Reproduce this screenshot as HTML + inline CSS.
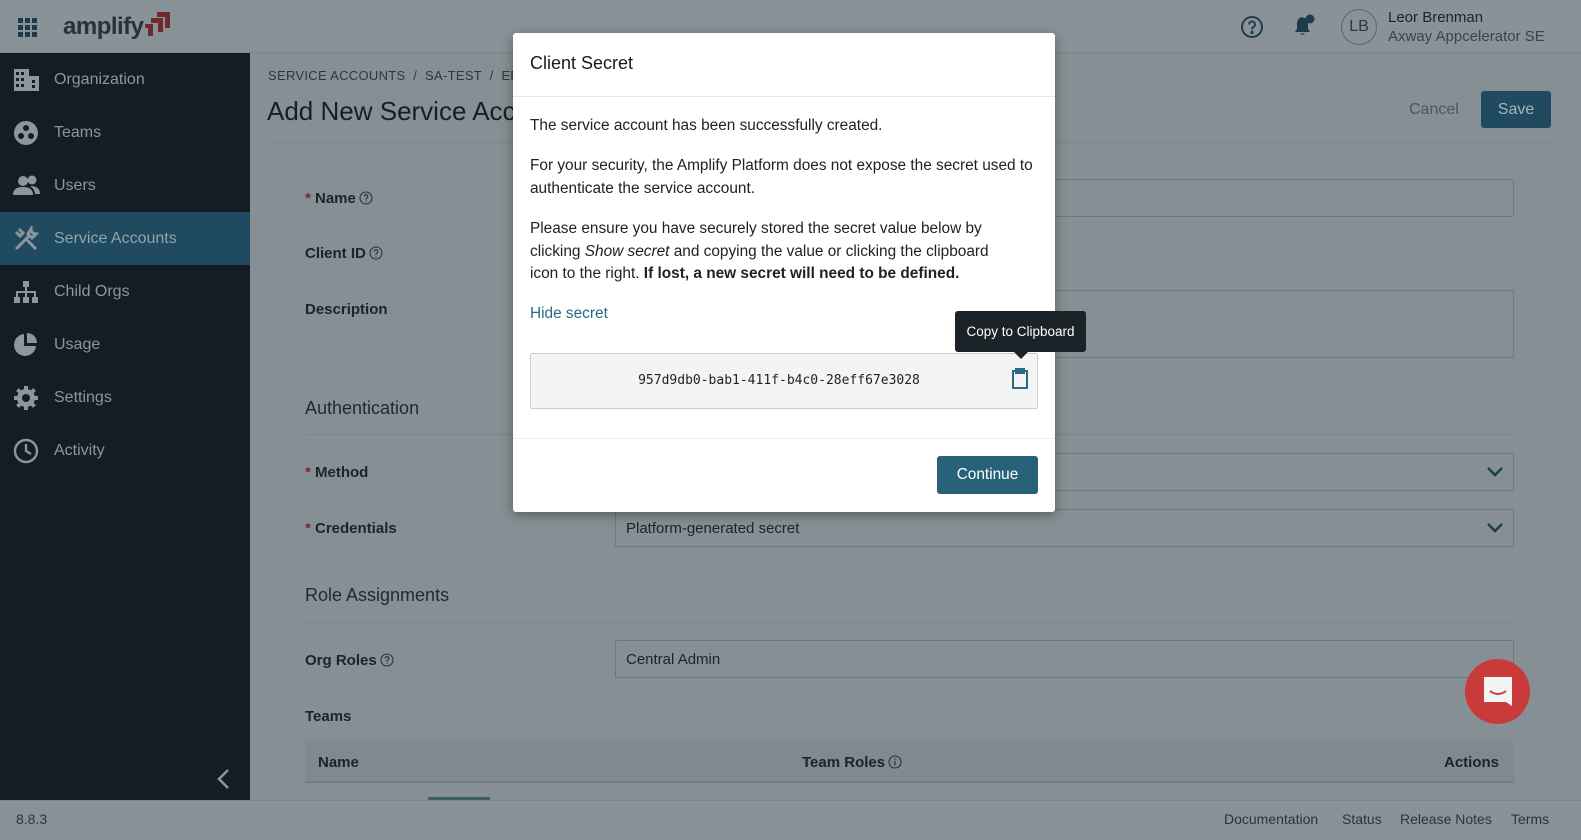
<!DOCTYPE html>
<html><head><style>
*{box-sizing:border-box;margin:0;padding:0}
body{width:1581px;height:840px;overflow:hidden;background:#868f94;font-family:"Liberation Sans",sans-serif;position:relative;color:#1a242b}
.a{position:absolute}
.hdr{left:0;top:0;width:1581px;height:53px;background:#899297;border-bottom:1px solid #7c858a}
.side{left:0;top:53px;width:250px;height:747px;background:#131d23}
.nav{position:absolute;left:0;width:250px;height:53px;color:#8d969b;font-size:16px;line-height:53px;padding-left:54px}
.nav.act{background:#1f4a5f}
.nav svg{position:absolute;left:13px;top:14px}
.foot{left:0;top:800px;width:1581px;height:40px;background:#899297;border-top:1px solid #7c858a;font-size:14px;color:#2a343b}
.lbl{font-size:15px;font-weight:bold;color:#1a242b;white-space:nowrap}
.lbl svg{vertical-align:-2px;margin-left:3px}
.req{color:#7a2a2a}
.inp{border:1px solid #6f787d;border-radius:2px;height:38px}
.sec{font-size:18px;color:#1f292f}
.hr{height:1px;background:#7c858a}
.modal{left:513px;top:33px;width:542px;height:479px;background:#fff;border-radius:3px;box-shadow:0 3px 12px rgba(0,0,0,.35)}
.mt{font-size:15.4px;color:#222;line-height:22.5px}
</style></head><body>
<svg width="0" height="0" style="position:absolute"><defs>
<symbol id="q" viewBox="0 0 14 14"><circle cx="7" cy="7" r="6" fill="none" stroke="#2a343b" stroke-width="1.1"/><path d="M5.2 5.5a1.8 1.8 0 1 1 2.4 1.7c-.5.2-.6.6-.6 1v.4" fill="none" stroke="#2a343b" stroke-width="1.1"/><circle cx="7" cy="10.2" r=".6" fill="#2a343b"/></symbol>
<symbol id="i" viewBox="0 0 14 14"><circle cx="7" cy="7" r="6" fill="none" stroke="#2a343b" stroke-width="1.1"/><path d="M7 6v4.5" stroke="#2a343b" stroke-width="1.2"/><circle cx="7" cy="4" r=".7" fill="#2a343b"/></symbol>
</defs></svg>
<div class="a hdr">
 <svg class="a" style="left:18px;top:18px" width="19" height="19" viewBox="0 0 19 19" fill="#1f3c4c"><rect x="0" y="0" width="5" height="5"/><rect x="7" y="0" width="5" height="5"/><rect x="14" y="0" width="5" height="5"/><rect x="0" y="7" width="5" height="5"/><rect x="7" y="7" width="5" height="5"/><rect x="14" y="7" width="5" height="5"/><rect x="0" y="14" width="5" height="5"/><rect x="7" y="14" width="5" height="5"/><rect x="14" y="14" width="5" height="5"/></svg>
 <div class="a" style="left:63px;top:13px;font-size:24px;font-weight:bold;color:#2a3237;letter-spacing:-0.5px">amplify</div>
 <svg class="a" style="left:145px;top:12px" width="26" height="26" viewBox="0 0 26 26" fill="#6e2a2e"><path d="M0 12h8v12h-5v-8h-3z"/><path d="M6 6h12v14h-5v-9h-7z"/><path d="M12 0h13v16h-5v-11h-8z"/></svg>
 <svg class="a" style="left:1240px;top:15px" width="24" height="24" viewBox="0 0 24 24" fill="none" stroke="#1f3c4c" stroke-width="2"><circle cx="12" cy="12" r="10"/><path d="M9 9.5a3 3 0 1 1 4 2.8c-.8.4-1 1-1 1.7v.5"/><circle cx="12" cy="17.5" r=".6" fill="#1f3c4c"/></svg>
 <svg class="a" style="left:1291px;top:13px" width="26" height="26" viewBox="0 0 26 26" fill="#1f3c4c"><path d="M11 4c-4 1-5 4-5 7v5l-2 3h15l-2-3v-5c0-2-.5-4-2-5.5z"/><path d="M9 20.5a3 3 0 0 0 5 0z"/><circle cx="19" cy="6" r="4.5"/></svg>
 <div class="a" style="left:1341px;top:9px;width:36px;height:36px;border:1px solid #5c666c;border-radius:50%;text-align:center;line-height:34px;font-size:16px;color:#2a3b45">LB</div>
 <div class="a" style="left:1388px;top:9px;font-size:15px;color:#1a242b">Leor Brenman</div>
 <div class="a" style="left:1388px;top:28px;font-size:15px;color:#3a454b">Axway Appcelerator SE</div>
</div>
<div class="a side">
 <div class="nav" style="top:0"><svg width="27" height="26" viewBox="0 0 27 26" fill="#8d969b"><path d="M1 2h15v22h-15zM16 9h10v15h-10z"/><g fill="#131d23"><rect x="3" y="5" width="3" height="3"/><rect x="8" y="5" width="3" height="3"/><rect x="3" y="11" width="3" height="3"/><rect x="8" y="11" width="3" height="3"/><rect x="3" y="17" width="3" height="3"/><rect x="8" y="17" width="3" height="3"/><rect x="19" y="13" width="3" height="3"/><rect x="19" y="18" width="3" height="3"/></g></svg>Organization</div>
 <div class="nav" style="top:53px"><svg width="26" height="26" viewBox="0 0 26 26"><circle cx="13" cy="13" r="12" fill="#8d969b"/><circle cx="13" cy="8" r="3" fill="#131d23"/><circle cx="8" cy="16" r="3" fill="#131d23"/><circle cx="18" cy="16" r="3" fill="#131d23"/></svg>Teams</div>
 <div class="nav" style="top:106px"><svg width="28" height="26" viewBox="0 0 28 26" fill="#8d969b"><circle cx="10" cy="8" r="5"/><circle cx="19" cy="7" r="4.5"/><path d="M0 22c0-6 4-8 10-8s10 2 10 8z"/><path d="M17 13c6 0 10 2 10 8h-5c0-3-2-6-5-8z"/></svg>Users</div>
 <div class="nav act" style="top:159px;color:#93a4ad"><svg width="26" height="26" viewBox="0 0 26 26" fill="none" stroke="#8d969b" stroke-width="3"><path d="M3 23l13-13M6 3l4 4-3 3-4-4M23 23l-9-9M18 3a5 5 0 0 0 5 5l-4 4-4-4z"/></svg>Service Accounts</div>
 <div class="nav" style="top:212px"><svg width="26" height="26" viewBox="0 0 26 26" fill="#8d969b"><rect x="10" y="2" width="6" height="6"/><rect x="1" y="18" width="6" height="6"/><rect x="10" y="18" width="6" height="6"/><rect x="19" y="18" width="6" height="6"/><path d="M12 8h2v4h9v6h-2v-4h-7v4h-2v-4h-7v4h-2v-6h9z"/></svg>Child Orgs</div>
 <div class="nav" style="top:265px"><svg width="26" height="26" viewBox="0 0 26 26" fill="#8d969b"><path d="M11 2a11 11 0 1 0 12 12h-12z"/><path d="M14 1v10h10a10 10 0 0 0-10-10z"/></svg>Usage</div>
 <div class="nav" style="top:318px"><svg width="26" height="26" viewBox="0 0 26 26"><circle cx="13" cy="13" r="9" fill="#8d969b"/><g stroke="#8d969b" stroke-width="4"><path d="M13 1v24M1 13h24M4.5 4.5l17 17M21.5 4.5l-17 17"/></g><circle cx="13" cy="13" r="4" fill="#131d23"/></svg>Settings</div>
 <div class="nav" style="top:371px"><svg width="26" height="26" viewBox="0 0 26 26" fill="none" stroke="#8d969b" stroke-width="2.4"><circle cx="13" cy="13" r="11"/><path d="M13 6v7l5 3"/></svg>Activity</div>
 <svg class="a" style="left:215px;top:715px" width="16" height="22" viewBox="0 0 16 22" fill="none" stroke="#8d969b" stroke-width="2.5"><path d="M13 2l-9 9 9 9"/></svg>
</div>
<div class="a" style="left:268px;top:68px;font-size:13px;color:#2c373e;letter-spacing:.3px">SERVICE ACCOUNTS &nbsp;/&nbsp; SA-TEST &nbsp;/&nbsp; ED</div>
<div class="a" style="left:267px;top:96px;font-size:26px;color:#161f25">Add New Service Account</div>
<div class="a" style="left:1409px;top:101px;font-size:16px;color:#4b565c">Cancel</div>
<div class="a" style="left:1481px;top:91px;width:70px;height:37px;background:#1f4a5f;border-radius:3px;color:#a7b4bb;font-size:16px;text-align:center;line-height:37px">Save</div>
<div class="a hr" style="left:268px;top:142px;width:1283px"></div>
<div class="a lbl" style="left:305px;top:190px"><span class="req">*</span> Name<svg width="14" height="14"><use href="#q"/></svg></div>
<div class="a inp" style="left:615px;top:179px;width:899px"></div>
<div class="a lbl" style="left:305px;top:245px">Client ID<svg width="14" height="14"><use href="#q"/></svg></div>
<div class="a lbl" style="left:305px;top:301px">Description</div>
<div class="a inp" style="left:615px;top:290px;width:899px;height:68px"></div>
<div class="a sec" style="left:305px;top:398px">Authentication</div>
<div class="a hr" style="left:305px;top:434px;width:1209px"></div>
<div class="a lbl" style="left:305px;top:464px"><span class="req">*</span> Method</div>
<div class="a inp" style="left:615px;top:453px;width:899px"></div>
<div class="a lbl" style="left:305px;top:520px"><span class="req">*</span> Credentials</div>
<div class="a inp" style="left:615px;top:509px;width:899px;font-size:15px;padding:10px;color:#1a242b">Platform-generated secret</div>
<svg class="a" style="left:1487px;top:467px" width="16" height="10" viewBox="0 0 16 10" fill="none" stroke="#1f3c4c" stroke-width="2.4"><path d="M1 1l7 7 7-7"/></svg>
<svg class="a" style="left:1487px;top:523px" width="16" height="10" viewBox="0 0 16 10" fill="none" stroke="#1f3c4c" stroke-width="2.4"><path d="M1 1l7 7 7-7"/></svg>
<div class="a sec" style="left:305px;top:585px">Role Assignments</div>
<div class="a hr" style="left:305px;top:622px;width:1209px"></div>
<div class="a lbl" style="left:305px;top:652px">Org Roles<svg width="14" height="14"><use href="#q"/></svg></div>
<div class="a inp" style="left:615px;top:640px;width:899px;font-size:15px;padding:10px;color:#1a242b">Central Admin</div>
<div class="a lbl" style="left:305px;top:708px">Teams</div>
<div class="a" style="left:305px;top:741px;width:1209px;height:42px;background:#80898d;border-bottom:2px solid #747d82"></div>
<div class="a lbl" style="left:318px;top:754px">Name</div>
<div class="a lbl" style="left:802px;top:754px">Team Roles<svg width="14" height="14"><use href="#i"/></svg></div>
<div class="a lbl" style="left:1444px;top:754px">Actions</div>
<div class="a" style="left:428px;top:797px;width:62px;height:3px;background:#3f5e5d"></div>
<div class="a" style="left:1465px;top:659px;width:65px;height:65px;border-radius:50%;background:#c93a3b"></div>
<svg class="a" style="left:1481px;top:675px" width="34" height="34" viewBox="0 0 34 34"><path d="M3 2h28v29l-6-4h-22z" fill="#f3f3f3"/><path d="M9 16q8 6 16 0" fill="none" stroke="#c93a3b" stroke-width="2"/></svg>
<div class="a foot"><span class="a" style="left:16px;top:10px">8.8.3</span><span class="a" style="left:1224px;top:10px">Documentation</span><span class="a" style="left:1342px;top:10px">Status</span><span class="a" style="left:1400px;top:10px">Release Notes</span><span class="a" style="left:1511px;top:10px">Terms</span></div>
<div class="a modal">
 <div class="a" style="left:17px;top:20px;font-size:18px;color:#1a1a1a">Client Secret</div>
 <div class="a" style="left:0;top:63px;width:542px;height:1px;background:#e6e6e6"></div>
 <div class="a mt" style="left:17px;top:82px">The service account has been successfully created.</div>
 <div class="a mt" style="left:17px;top:122px;width:512px">For your security, the Amplify Platform does not expose the secret used to authenticate the service account.</div>
 <div class="a mt" style="left:17px;top:185px;width:485px">Please ensure you have securely stored the secret value below by clicking <i>Show secret</i> and copying the value or clicking the clipboard icon to the right. <b>If lost, a new secret will need to be defined.</b></div>
 <div class="a" style="left:17px;top:272px;font-size:15.4px;color:#2b6a84">Hide secret</div>
 <div class="a" style="left:17px;top:320px;width:508px;height:56px;background:#f4f4f4;border:1px solid #ccc;border-radius:2px;font-family:'DejaVu Sans Mono','Liberation Mono',monospace;font-size:13px;color:#222;text-align:center;line-height:54px;padding-right:10px">957d9db0-bab1-411f-b4c0-28eff67e3028</div>
 <svg class="a" style="left:498px;top:335px" width="18" height="22" viewBox="0 0 18 22" fill="none" stroke="#2b6a84" stroke-width="2"><path d="M5 3h-3v17h14v-17h-3"/><rect x="5" y="1" width="8" height="4" fill="#2b6a84"/></svg>
 <div class="a" style="left:0;top:405px;width:542px;height:1px;background:#eee"></div>
 <div class="a" style="left:424px;top:423px;width:101px;height:38px;background:#27617a;border-radius:3px;color:#fff;font-size:15.4px;text-align:center;line-height:38px">Continue</div>
</div>
<div class="a" style="left:955px;top:311px;width:131px;height:41px;background:#1c2328;border-radius:3px;color:#fff;font-size:13.5px;text-align:center;line-height:41px">Copy to Clipboard</div>
<div class="a" style="left:1014px;top:352px;width:0;height:0;border-left:7px solid transparent;border-right:7px solid transparent;border-top:7px solid #1c2328"></div>
</body></html>
